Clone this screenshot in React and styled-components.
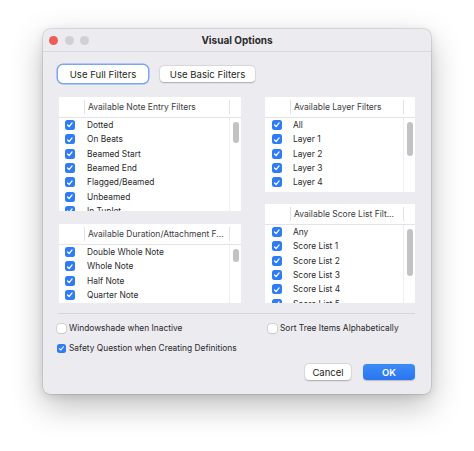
import React from "react";
import styled, { createGlobalStyle } from "styled-components";

const Global = createGlobalStyle`
  html, body { margin: 0; padding: 0; background: #ffffff; }
  body { font-family: Inter, "Liberation Sans", sans-serif; -webkit-font-smoothing: antialiased; }
`;

const Stage = styled.div`
  width: 474px;
  height: 451px;
  padding: 29px 0 0 43px;
  box-sizing: border-box;
`;

const Window = styled.div`
  width: 388px;
  height: 365px;
  box-sizing: border-box;
  background: #ecebf0;
  border-radius: 7px;
  box-shadow: 0 12px 32px rgba(0, 0, 0, 0.26), 0 2px 8px rgba(0, 0, 0, 0.1), 0 0 0 0.5px rgba(0, 0, 0, 0.18);
  display: flex;
  flex-direction: column;
  overflow: hidden;
`;

const TitleBar = styled.div`
  height: 22px;
  flex: none;
  display: grid;
  grid-template-columns: 1fr auto 1fr;
  align-items: center;
  border-bottom: 1px solid #d9d8dd;
  padding: 0 6px;
`;

const Lights = styled.div`
  display: flex;
  gap: 6.5px;
  align-items: center;
`;

const Light = styled.span`
  width: 9px;
  height: 9px;
  border-radius: 50%;
  background: ${(p) => p.$c};
`;

const Title = styled.div`
  font-size: 10px;
  font-weight: 700;
  color: #2b2b2d;
`;

const Content = styled.div`
  padding: 14px 16px 0 16px;
  display: flex;
  flex-direction: column;
`;

const ButtonRow = styled.div`
  display: flex;
  gap: 13px;
  align-items: center;
`;

const PushButton = styled.button`
  height: 16px;
  width: ${(p) => p.$w}px;
  padding: 0;
  border: none;
  border-radius: 4px;
  background: ${(p) => (p.$primary ? "linear-gradient(#3d8bf8, #2a75f1)" : "#ffffff")};
  color: ${(p) => (p.$primary ? "#ffffff" : "#1f1f21")};
  font-family: inherit;
  font-size: ${(p) => p.$fs || 9.6}px;
  font-weight: ${(p) => (p.$primary ? 600 : 400)};
  box-shadow: ${(p) =>
    p.$focus
      ? "0 0 0 1px #fff, 0 0 0 2.5px #7aa6f0"
      : p.$primary
      ? "0 0.5px 1px rgba(0,0,0,0.2)"
      : "0 0.5px 1.5px rgba(0,0,0,0.25), 0 0 0 0.5px rgba(0,0,0,0.08)"};
  display: flex;
  align-items: center;
  justify-content: center;
`;

const PanelGrid = styled.div`
  margin-top: 15px;
  display: grid;
  grid-template-columns: 182px 150px;
  column-gap: 24px;
`;

const Column = styled.div`
  display: flex;
  flex-direction: column;
  gap: ${(p) => p.$gap}px;
`;

const Panel = styled.div`
  height: ${(p) => p.$h}px;
  background: #ffffff;
  display: flex;
  flex-direction: column;
  overflow: hidden;
`;

const Header = styled.div`
  height: 21px;
  flex: none;
  display: grid;
  grid-template-columns: 25px 1fr ${(p) => p.$sb}px;
  align-items: center;
  border-bottom: 1px solid #e4e4e6;
  box-sizing: border-box;
`;

const HeaderCell = styled.div`
  height: 14px;
  display: flex;
  align-items: center;
  border-left: ${(p) => (p.$line ? "1px solid #e2e2e4" : "none")};
  padding-left: 3px;
  font-size: 8.5px;
  color: #3c3c3e;
  white-space: nowrap;
  overflow: hidden;
  min-width: 0;
`;

const Body = styled.div`
  flex: 1;
  display: grid;
  grid-template-columns: 1fr ${(p) => p.$sb}px;
  overflow: hidden;
  min-height: 0;
`;

const Rows = styled.div`
  display: flex;
  flex-direction: column;
  overflow: hidden;
`;

const Row = styled.div`
  height: 14.3px;
  flex: none;
  display: grid;
  grid-template-columns: 25px 1fr;
  align-items: center;
`;

const CheckCell = styled.div`
  display: flex;
  padding-left: ${(p) => p.$pl}px;
`;

const Label = styled.div`
  padding-left: 3px;
  font-size: 8.4px;
  color: #2a2a2c;
  white-space: nowrap;
`;

const Track = styled.div`
  border-left: 1px solid #eeeeef;
  display: flex;
  justify-content: center;
  padding-top: 4px;
`;

const Thumb = styled.div`
  width: 6px;
  height: ${(p) => p.$h}px;
  border-radius: 3px;
  background: #c2c2c4;
`;

const Box = styled.span`
  width: ${(p) => p.$s}px;
  height: ${(p) => p.$s}px;
  border-radius: 2.5px;
  box-sizing: border-box;
  display: inline-flex;
  align-items: center;
  justify-content: center;
  flex: none;
  background: ${(p) => (p.$on ? "#2f7cf6" : "#ffffff")};
  box-shadow: ${(p) => (p.$on ? "none" : "0 0 0 0.5px rgba(0,0,0,0.2), 0 0.5px 1px rgba(0,0,0,0.12)")};
`;

const Check = ({ on = true, size = 10 }) => (
  <Box $on={on} $s={size}>
    {on && (
      <svg width={size * 0.75} height={size * 0.75} viewBox="0 0 10 10">
        <path d="M2 5.3 L4.2 7.4 L8.1 2.6" fill="none" stroke="#fff" strokeWidth="1.7" strokeLinecap="round" strokeLinejoin="round" />
      </svg>
    )}
  </Box>
);

const Separator = styled.div`
  margin-top: 10px;
  height: 1px;
  background: #d6d5da;
  margin-left: -1px;
`;

const Options = styled.div`
  margin-top: 8px;
  display: grid;
  grid-template-columns: 211px 1fr;
  row-gap: 8px;
  margin-left: -2px;
`;

const Option = styled.label`
  height: 12px;
  display: flex;
  align-items: center;
  gap: 3px;
  font-size: 8.4px;
  color: #2a2a2c;
  white-space: nowrap;
`;

const Footer = styled.div`
  margin-top: 10px;
  display: flex;
  justify-content: flex-end;
  gap: 12px;
`;

const Spacer = styled.div``;

const FilterPanel = ({ h, title, items, thumb, sb, pl }) => (
  <Panel $h={h}>
    <Header $sb={sb}>
      <span />
      <HeaderCell $line>{title}</HeaderCell>
      <HeaderCell $line />
    </Header>
    <Body $sb={sb}>
      <Rows>
        {items.map((t) => (
          <Row key={t}>
            <CheckCell $pl={pl}>
              <Check />
            </CheckCell>
            <Label>{t}</Label>
          </Row>
        ))}
      </Rows>
      <Track>
        <Thumb $h={thumb} />
      </Track>
    </Body>
  </Panel>
);

export default function App() {
  return (
    <>
      <Global />
      <Stage>
        <Window>
          <TitleBar>
            <Lights>
              <Light $c="#ec5d56" />
              <Light $c="#d1d0d5" />
              <Light $c="#d1d0d5" />
            </Lights>
            <Title>Visual Options</Title>
            <Spacer />
          </TitleBar>
          <Content>
            <ButtonRow>
              <PushButton $w={88} $focus>Use Full Filters</PushButton>
              <PushButton $w={95}>Use Basic Filters</PushButton>
            </ButtonRow>
            <PanelGrid>
              <Column $gap={13}>
                <FilterPanel
                  h={114}
                  sb={12}
                  pl={6}
                  title="Available Note Entry Filters"
                  thumb={21}
                  items={["Dotted", "On Beats", "Beamed Start", "Beamed End", "Flagged/Beamed", "Unbeamed", "In Tuplet"]}
                />
                <FilterPanel
                  h={79}
                  sb={12}
                  pl={6}
                  title="Available Duration/Attachment F..."
                  thumb={13}
                  items={["Double Whole Note", "Whole Note", "Half Note", "Quarter Note", "Eighth Note"]}
                />
              </Column>
              <Column $gap={12}>
                <FilterPanel
                  h={95}
                  sb={12}
                  pl={7}
                  title="Available Layer Filters"
                  thumb={34}
                  items={["All", "Layer 1", "Layer 2", "Layer 3", "Layer 4", "Layer 5"]}
                />
                <FilterPanel
                  h={99}
                  sb={12}
                  pl={7}
                  title="Available Score List Filt..."
                  thumb={47}
                  items={["Any", "Score List 1", "Score List 2", "Score List 3", "Score List 4", "Score List 5"]}
                />
              </Column>
            </PanelGrid>
            <Separator />
            <Options>
              <Option>
                <Check on={false} size={9} />
                Windowshade when Inactive
              </Option>
              <Option>
                <Check on={false} size={9} />
                Sort Tree Items Alphabetically
              </Option>
              <Option>
                <Check on size={9} />
                Safety Question when Creating Definitions
              </Option>
            </Options>
            <Footer>
              <PushButton $w={46} $fs={9.5}>Cancel</PushButton>
              <PushButton $w={52} $fs={9.5} $primary>OK</PushButton>
            </Footer>
          </Content>
        </Window>
      </Stage>
    </>
  );
}
